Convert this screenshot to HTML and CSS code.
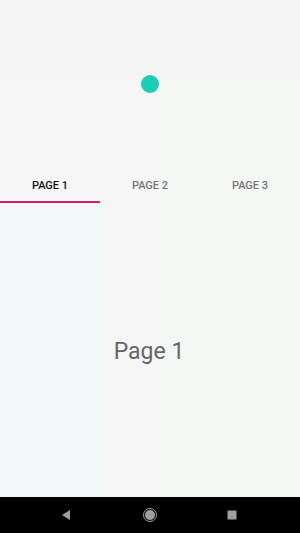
FILE: index.html
```html
<!DOCTYPE html>
<html lang="en">
<head>
  <meta charset="UTF-8">
  <meta name="viewport" content="width=device-width, initial-scale=1.0">
  <title>Tabs</title>
  <link rel="stylesheet" href="styles.css">
</head>
<body>
  <div class="screen">
    <!-- Header with loading dot -->
    <div class="header">
      <span class="dot"></span>
    </div>

    <!-- Tabs -->
    <div class="tabs">
      <div class="tab active">PAGE 1</div>
      <div class="tab">PAGE 2</div>
      <div class="tab">PAGE 3</div>
    </div>

    <!-- Page content -->
    <div class="content">
      <div class="page-title">Page 1</div>
    </div>

    <!-- Android nav bar -->
    <div class="navbar">
      <svg width="12" height="12" viewBox="0 0 12 12"><polygon points="10,1 10,11 2,6" fill="#9e9e9e"/></svg>
      <svg width="14" height="14" viewBox="0 0 14 14"><circle cx="7" cy="7" r="5.5" fill="#9e9e9e" stroke="#000" stroke-width="1"/><circle cx="7" cy="7" r="6.5" fill="none" stroke="#9e9e9e" stroke-width="1"/></svg>
      <svg width="10" height="10" viewBox="0 0 10 10"><rect x="0.5" y="0.5" width="9" height="9" fill="#9e9e9e"/></svg>
    </div>
  </div>
</body>
</html>
```
FILE: styles.css
```css
html, body {
  margin: 0;
  padding: 0;
}

body {
  font-family: Roboto, "Noto Sans", sans-serif;
  background-color: #f5f5f5;
}

.screen {
  width: 300px;
  height: 533px;
  display: flex;
  flex-direction: column;
  background:
    linear-gradient(#f5f5f5, #f5f5f5) 0 0 / 100% 79px no-repeat,
    linear-gradient(90deg, #f6f6f6 158px, #f4f7f3 158px);
}

.header {
  height: 165px;
  display: flex;
  justify-content: center;
  padding-top: 75px;
  box-sizing: border-box;
}

.dot {
  width: 18px;
  height: 18px;
  border-radius: 50%;
  background-color: #1ccdb6;
}

.tabs {
  height: 38px;
  display: flex;
}

.tab {
  flex: 1;
  display: flex;
  align-items: center;
  justify-content: center;
  font-size: 11px;
  font-weight: 500;
  color: #757575;
  border-bottom: 2px solid transparent;
  box-sizing: border-box;
  padding-top: 4px;
}

.tab.active {
  color: #111;
  border-bottom-color: #d81b60;
}

.content {
  flex: 1;
  display: flex;
  align-items: center;
  justify-content: center;
  background: linear-gradient(90deg, #f2f7f7 100px, transparent 100px);
}

.page-title {
  font-size: 23px;
  color: #666;
  margin-top: 2px;
  margin-left: -2px;
}

.navbar {
  height: 36px;
  background-color: #000;
  display: flex;
  align-items: center;
  justify-content: space-between;
  padding: 0 63px 0 60px;
}
```
